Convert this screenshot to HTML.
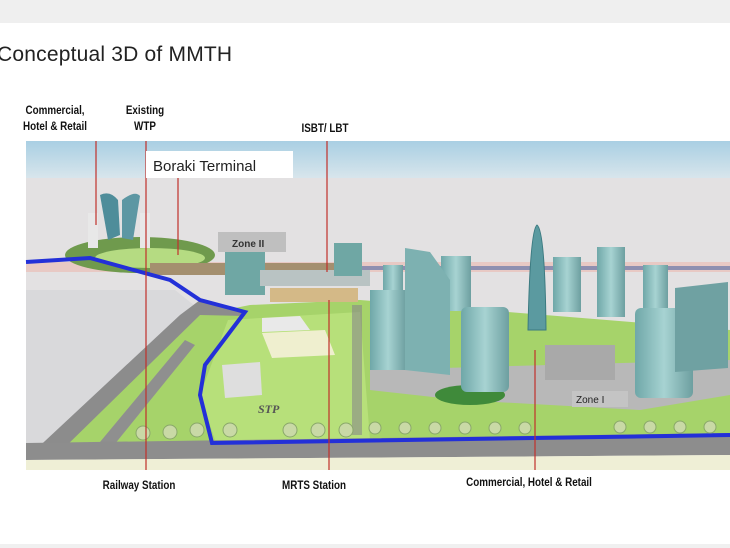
<!DOCTYPE html>
<html><head><meta charset="utf-8"><style>
html,body{margin:0;padding:0;width:730px;height:548px;overflow:hidden;background:#fff;font-family:"Liberation Sans",sans-serif}
.top{position:absolute;left:0;top:0;width:730px;height:23px;background:#efefef}
.bot{position:absolute;left:0;top:544px;width:730px;height:4px;background:#f0f0f0}
.title{position:absolute;left:-3px;top:43px;font-size:21px;color:#222;letter-spacing:0.2px}
.lb{position:absolute;font-size:12px;font-weight:bold;color:#111;text-align:center;line-height:16px;transform:scaleX(0.82);white-space:nowrap}
svg{position:absolute;left:0;top:0}
</style></head><body>
<div class="top"></div>
<div class="title">Conceptual 3D of MMTH</div>
<div class="lb" style="left:5px;top:102px;width:100px">Commercial,<br>Hotel &amp; Retail</div>
<div class="lb" style="left:105px;top:102px;width:80px">Existing<br>WTP</div>
<div class="lb" style="left:280px;top:120px;width:90px">ISBT/ LBT</div>
<div class="lb" style="left:79px;top:477px;width:120px">Railway Station</div>
<div class="lb" style="left:264px;top:477px;width:100px">MRTS Station</div>
<div class="lb" style="left:444px;top:474px;width:170px">Commercial, Hotel &amp; Retail</div>
<svg width="730" height="548" viewBox="0 0 730 548">
<defs>
<linearGradient id="sky" x1="0" y1="0" x2="0" y2="1"><stop offset="0" stop-color="#a9cfe3"/><stop offset="1" stop-color="#d9e6ec"/></linearGradient>
<linearGradient id="tw" x1="0" y1="0" x2="1" y2="0"><stop offset="0" stop-color="#6fa7a8"/><stop offset="0.5" stop-color="#a7d3d2"/><stop offset="1" stop-color="#6d9fa0"/></linearGradient>
</defs>
<rect x="26" y="141" width="704" height="38" fill="url(#sky)"/>
<rect x="26" y="178" width="704" height="292" fill="#e3e1e2"/>
<rect x="26" y="262" width="704" height="10" fill="#e8c9c4"/>
<rect x="330" y="266" width="400" height="4" fill="#8e8fb0"/>
<polygon points="26,290 175,290 200,310 120,390 40,450 26,450" fill="#d9d9db"/>
<polygon points="40,448 180,318 215,312 250,305 360,300 730,330 730,440 40,452" fill="#a6d36a"/>
<polygon points="228,320 360,312 370,440 215,440 200,395" fill="#b7e07a"/>
<polygon points="30,455 180,315 200,300 240,310 245,316 200,315 60,452" fill="#8c8c8c"/>
<polygon points="95,448 185,340 195,345 110,450" fill="#8f8f8f"/>
<ellipse cx="140" cy="255" rx="75" ry="18" fill="#6f9a4d"/>
<ellipse cx="150" cy="258" rx="55" ry="10" fill="#b5db82"/>
<rect x="150" y="263" width="190" height="12" fill="#a48f6f"/>
<rect x="225" y="250" width="40" height="45" fill="#6fa7a4"/>
<rect x="260" y="270" width="110" height="16" fill="#b9c3c3"/>
<rect x="334" y="243" width="28" height="33" fill="#6fa7a4"/>
<rect x="270" y="288" width="88" height="14" fill="#d4b987"/>
<rect x="218" y="232" width="68" height="20" fill="#bfbfbf"/>
<text x="232" y="247" font-family="Liberation Sans" font-size="10" font-weight="bold" fill="#333">Zone II</text>
<path d="M100,195 Q110,190 118,200 L120,235 L108,240 Z" fill="#4f8d9a"/>
<path d="M122,200 Q135,190 140,196 L133,240 L122,238 Z" fill="#5d97a3"/>
<rect x="88" y="213" width="10" height="35" fill="#e8e8e8"/>
<rect x="140" y="213" width="10" height="35" fill="#e8e8e8"/>
<polygon points="262,318 300,316 310,330 262,332" fill="#e9e9e9"/>
<polygon points="262,333 325,330 335,355 272,358" fill="#efefcf"/>
<polygon points="222,365 260,362 262,395 225,398" fill="#dedede"/>
<text x="258" y="413" font-family="Liberation Serif" font-size="12" font-weight="bold" font-style="italic" fill="#555">STP</text>
<rect x="352" y="305" width="10" height="130" fill="#888" opacity="0.6"/>
<polygon points="26,443 730,433 730,455 26,460" fill="#8d8d8d"/>
<polygon points="26,460 730,455 730,470 26,470" fill="#efefd6"/>
<path d="M26,262 L90,258 L170,280 L200,300 L245,312 L205,365 L200,395 L212,443 L730,435" stroke="#2330d8" stroke-width="4" fill="none"/>
<g fill="#c9d9a6" stroke="#8aa86a" stroke-width="1">
<circle cx="143" cy="433" r="7"/><circle cx="170" cy="432" r="7"/><circle cx="197" cy="430" r="7"/><circle cx="230" cy="430" r="7"/><circle cx="290" cy="430" r="7"/><circle cx="318" cy="430" r="7"/><circle cx="346" cy="430" r="7"/><circle cx="375" cy="428" r="6"/><circle cx="405" cy="428" r="6"/><circle cx="435" cy="428" r="6"/><circle cx="465" cy="428" r="6"/><circle cx="495" cy="428" r="6"/><circle cx="525" cy="428" r="6"/><circle cx="620" cy="427" r="6"/><circle cx="650" cy="427" r="6"/><circle cx="680" cy="427" r="6"/><circle cx="710" cy="427" r="6"/>
</g>
<polygon points="370,370 730,360 730,395 640,410 460,400 370,390" fill="#b8b8b8"/>
<ellipse cx="470" cy="395" rx="35" ry="10" fill="#3f8a3a"/>
<rect x="383" y="265" width="20" height="40" fill="url(#tw)"/>
<rect x="441" y="256" width="30" height="55" fill="url(#tw)"/>
<rect x="553" y="257" width="28" height="55" fill="url(#tw)"/>
<rect x="597" y="247" width="28" height="70" fill="url(#tw)"/>
<rect x="643" y="265" width="25" height="45" fill="url(#tw)"/>
<path d="M528,330 Q530,230 537,225 Q545,230 546,330 Z" fill="#5b9aa0" stroke="#3b7a80"/>
<rect x="370" y="290" width="36" height="80" fill="url(#tw)"/>
<polygon points="405,248 430,252 450,280 450,375 405,370" fill="#7db1b1"/>
<rect x="461" y="307" width="48" height="85" rx="6" fill="url(#tw)"/>
<rect x="635" y="308" width="58" height="90" rx="6" fill="url(#tw)"/>
<polygon points="675,288 728,282 728,368 675,372" fill="#6fa1a2"/>
<rect x="545" y="345" width="70" height="35" fill="#a9a9a9"/>
<rect x="572" y="391" width="56" height="16" fill="#c4c4c4"/>
<text x="576" y="403" font-family="Liberation Sans" font-size="10" fill="#222">Zone I</text>
<g stroke="#c0302a" stroke-width="1.2">
<line x1="96" y1="141" x2="96" y2="225"/>
<line x1="146" y1="141" x2="146" y2="470"/>
<line x1="178" y1="178" x2="178" y2="255"/>
<line x1="327" y1="141" x2="327" y2="272"/>
<line x1="329" y1="300" x2="329" y2="470"/>
<line x1="535" y1="350" x2="535" y2="470"/>
</g>
<rect x="146" y="151" width="147" height="27" fill="#fff"/>
<text x="153" y="171" font-family="Liberation Sans" font-size="15" fill="#222">Boraki Terminal</text>
</svg>
<div class="bot"></div>
</body></html>
